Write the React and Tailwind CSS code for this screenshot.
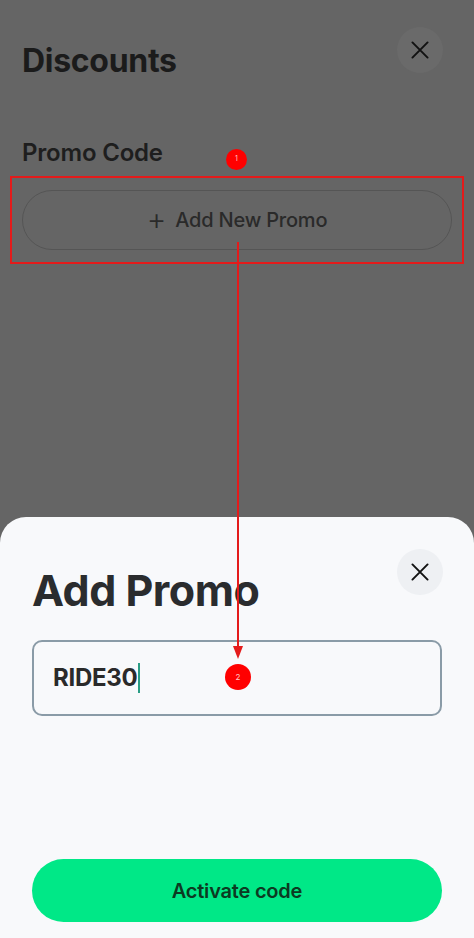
import React from "react";

function XIcon({ className }) {
  return (
    <svg viewBox="0 0 24 24" className={className} fill="none" stroke="currentColor" strokeWidth="1.8" strokeLinecap="round">
      <path d="M5 5 L19 19 M19 5 L5 19" />
    </svg>
  );
}

export default function App() {
  return (
    <div
      className="relative h-[938px] w-[474px] overflow-hidden bg-[#656565] flex flex-col"
      style={{ fontFamily: "Inter, 'Noto Sans', sans-serif" }}
    >
      {/* dimmed page */}
      <div className="px-[22px] pt-[27px]">
        <div className="flex items-start justify-between">
          <h1 className="text-[32px] font-bold text-[#1b1b1b] tracking-[-0.3px] mt-[18px] leading-none">Discounts</h1>
          <div className="w-[46px] h-[46px] rounded-full bg-[#6a6a6a] flex items-center justify-center mr-[9px]">
            <XIcon className="w-[26px] h-[26px] text-[#111]" />
          </div>
        </div>
        <h2 className="mt-[64px] text-[24px] font-semibold text-[#1e1e1e] leading-none tracking-[-0.2px]">Promo Code</h2>
        <div className="mt-[11px] mx-[-12px] border-2 border-[#e41b1b] px-[10px] py-[12px]">
          <div className="h-[60px] rounded-full border border-[#555] flex items-center justify-center gap-[9px] text-[#2a2a2a]">
            <span className="text-[30px] font-light leading-none mt-[-3px]">+</span>
            <span className="text-[20px] font-medium tracking-[-0.2px]">Add New Promo</span>
          </div>
        </div>
      </div>

      {/* bottom sheet */}
      <div className="mt-auto h-[421px] rounded-t-[26px] bg-[#f8f9fb] px-[32px] pt-[32px]">
        <div className="flex items-start justify-between">
          <h1 className="mt-[20px] text-[43px] font-bold text-[#2a2c2e] tracking-[-0.5px] leading-none">Add Promo</h1>
          <div className="w-[46px] h-[46px] rounded-full bg-[#eef0f3] flex items-center justify-center mr-[-1px]">
            <XIcon className="w-[26px] h-[26px] text-[#111]" />
          </div>
        </div>
        <div className="mt-[28px] h-[76px] rounded-[10px] border-2 border-[#8a9ba7] flex items-center px-[19px]">
          <span className="text-[24px] font-bold text-[#2a2a2a] tracking-[-0.3px]">RIDE30</span>
          <span className="w-[2px] h-[30px] bg-[#2a9d85] ml-[1px]" />
        </div>
        <div className="mt-[143px] h-[63px] rounded-full bg-[#00e887] flex items-center justify-center">
          <span className="text-[20px] font-semibold text-[#0c3a22] tracking-[-0.2px]">Activate code</span>
        </div>
      </div>

      {/* annotations */}
      <svg className="absolute inset-0 pointer-events-none" width="474" height="938">
        <line x1="238" y1="242" x2="238" y2="650" stroke="#e41b1b" strokeWidth="2" />
        <polygon points="233,646 243,646 238,659" fill="#e41b1b" />
      </svg>
      <div className="absolute left-[226px] top-[149px] w-[21px] h-[21px] rounded-full bg-[#ff0000] flex items-center justify-center text-[7px] text-[#ffcaca]">1</div>
      <div className="absolute left-[225px] top-[664px] w-[26px] h-[26px] rounded-full bg-[#ff0000] flex items-center justify-center text-[8px] text-[#ffcaca]">2</div>
    </div>
  );
}
